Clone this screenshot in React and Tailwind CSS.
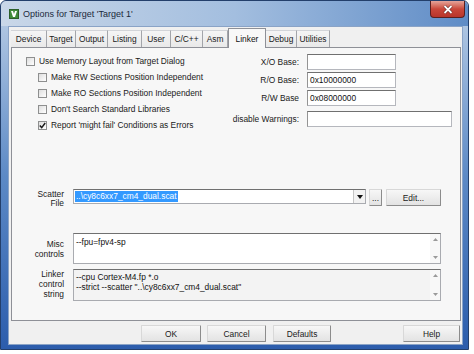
import React from "react";

const tabs = [
  { name: "Device", w: "w-[36px]" },
  { name: "Target", w: "w-[29px]" },
  { name: "Output", w: "w-[32px]" },
  { name: "Listing", w: "w-[34px]" },
  { name: "User", w: "w-[29px]" },
  { name: "C/C++", w: "w-[32px]" },
  { name: "Asm", w: "w-[25px]" },
  { name: "Linker", w: "w-[38px]", active: true },
  { name: "Debug", w: "w-[31px]" },
  { name: "Utilities", w: "w-[33px]" },
];

function Check({ checked }) {
  return (
    <span className="w-[9px] h-[9px] border border-[#8e8f8f] bg-gradient-to-br from-[#dedede] to-white flex items-center justify-center shrink-0">
      {checked && (
        <svg width="7" height="7" viewBox="0 0 7 7">
          <path d="M0.8 3.4 L2.7 5.6 L6.2 1" stroke="#1a1a1a" strokeWidth="1.5" fill="none" />
        </svg>
      )}
    </span>
  );
}

function CheckRow({ label, checked, indent }) {
  return (
    <div className={`h-[16px] flex items-center gap-[4px] ${indent ? "pl-[12px]" : ""}`}>
      <Check checked={checked} />
      <span className="text-[#1a1a1a]">{label}</span>
    </div>
  );
}

function Field({ label, value, w, mt }) {
  return (
    <div className={`flex items-center h-[16px] ${mt}`}>
      <span className="w-[67px] text-right text-[#1a1a1a] whitespace-nowrap">{label}</span>
      <div className={`ml-[8px] h-[16px] ${w} bg-white border border-[#b5b7bd] border-t-[#707070] border-l-[#949494] pl-[2px] leading-[14px] text-[#111]`}>
        {value}
      </div>
    </div>
  );
}

function Btn({ label, w }) {
  return (
    <div className={`h-[17px] ${w} flex items-center justify-center border border-[#8c8c8c] border-t-[#d8d8d8] border-l-[#d8d8d8] bg-gradient-to-b from-[#f7f7f7] to-[#e3e3e3] text-[#1a1a1a] rounded-[1px]`}>
      {label}
    </div>
  );
}

function Arrows() {
  return (
    <div className="w-[10px] h-full flex flex-col justify-between items-center py-[4px] bg-[#f8f8f8]">
      <svg width="5" height="3" viewBox="0 0 5 3"><path d="M0 3 L2.5 0 L5 3 Z" fill="#9a9a9a" /></svg>
      <svg width="5" height="3" viewBox="0 0 5 3"><path d="M0 0 L2.5 3 L5 0 Z" fill="#9a9a9a" /></svg>
    </div>
  );
}

export default function App() {
  return (
    <div className="w-[474px] h-[354px] bg-white font-['Liberation_Sans',Arial,sans-serif] text-[8.4px] leading-[10px] overflow-hidden">
      {/* window frame */}
      <div className="w-[469px] h-[350px] rounded-t-[6px] border border-[#233f6b] bg-gradient-to-b from-[#bccfe6] via-[#5d8ac6] to-[#2c5dac] flex flex-col">
        {/* title bar */}
        <div className="h-[25px] flex items-start rounded-t-[6px] bg-gradient-to-r from-[#c9d7e8] via-[#a3bedf] to-[#5f8cc6]">
          <div className="mt-[8px] ml-[8px] w-[10px] h-[10px] bg-[#3f8a3a] border border-[#2b5e28] flex items-center justify-center">
            <svg width="8" height="8" viewBox="0 0 8 8">
              <path d="M1 1 L3 1 L4 4 L5 1 L7 1 L5 7 L3 7 Z" fill="#ffffff" />
            </svg>
          </div>
          <span className="mt-[8px] ml-[4px] text-[9px] leading-[11px] text-[#1b2a3c]">Options for Target 'Target 1'</span>
          <div className="ml-auto mr-[3px] w-[35px] h-[17px] rounded-b-[4px] border border-[#5a1f1f] border-t-0 bg-gradient-to-b from-[#e3a39a] via-[#c9473a] to-[#b8352b] flex items-center justify-center">
            <svg width="10" height="9" viewBox="0 0 10 9">
              <path d="M1.5 1 L8.5 8 M8.5 1 L1.5 8" stroke="#5a2020" strokeWidth="3" />
              <path d="M1.5 1 L8.5 8 M8.5 1 L1.5 8" stroke="#ffffff" strokeWidth="1.8" />
            </svg>
          </div>
        </div>

        {/* client area */}
        <div className="ml-[7px] mr-[5px] w-[455px] h-[319px] bg-[#f0f0f0] border border-[#8aa3c6] flex flex-col">
          {/* tabs */}
          <div className="h-[20px] flex items-end pl-[2px]">
            {tabs.map((t) =>
              t.active ? (
                <div key={t.name} className={`${t.w} h-[20px] -mb-px z-10 bg-[#f8f8f8] border border-b-0 border-[#8e9097] flex items-center justify-center text-[#111]`}>
                  {t.name}
                </div>
              ) : (
                <div key={t.name} className={`${t.w} h-[17px] border-r border-t border-[#a3a5aa] border-t-[#d2d4d8] bg-gradient-to-b from-[#f5f5f5] to-[#e9e9e9] flex items-center justify-center text-[#1a1a1a]`}>
                  {t.name}
                </div>
              )
            )}
          </div>

          {/* tab panel */}
          <div className="ml-[2px] w-[450px] h-[274px] bg-[#f7f7f7] border border-[#8e9097] flex flex-col">
            <div className="h-[130px] flex">
              <div className="w-[220px] pl-[14px] pt-[5px] flex flex-col">
                <CheckRow label="Use Memory Layout from Target Dialog" />
                <CheckRow indent label="Make RW Sections Position Independent" />
                <CheckRow indent label="Make RO Sections Position Independent" />
                <CheckRow indent label="Don't Search Standard Libraries" />
                <CheckRow indent checked label="Report 'might fail' Conditions as Errors" />
              </div>
              <div className="flex flex-col pt-[6px]">
                <Field label="X/O Base:" value="" w="w-[89px]" mt="" />
                <Field label="R/O Base:" value="0x10000000" w="w-[89px]" mt="mt-[2px]" />
                <Field label="R/W Base" value="0x08000000" w="w-[89px]" mt="mt-[2px]" />
                <Field label="disable Warnings:" value="" w="w-[145px]" mt="mt-[5px]" />
              </div>
            </div>

            {/* scatter file */}
            <div className="mt-[11px] h-[15px] flex items-start">
              <div className="w-[52px] text-right leading-[9px] pt-[1px] text-[#1a1a1a]">
                Scatter
                <br />
                File
              </div>
              <div className="ml-[9px] w-[293px] h-[15px] bg-white border border-[#a9abb0] border-t-[#707070] flex items-center">
                <span className="ml-[1px] px-[1px] bg-[#3399ff] text-white leading-[11px]">..\cy8c6xx7_cm4_dual.scat</span>
                <div className="ml-auto w-[12px] h-full border-l border-[#c5c5c5] bg-[#f2f2f2] flex items-center justify-center">
                  <svg width="6" height="4" viewBox="0 0 6 4"><path d="M0 0 L6 0 L3 4 Z" fill="#111" /></svg>
                </div>
              </div>
              <div className="ml-[3px]">
                <Btn label="..." w="w-[13px]" />
              </div>
              <div className="ml-[4px]">
                <Btn label="Edit..." w="w-[55px]" />
              </div>
            </div>

            {/* misc controls */}
            <div className="mt-[29px] h-[31px] flex items-start">
              <div className="w-[52px] text-right pt-[6px] text-[#1a1a1a]">
                Misc
                <br />
                controls
              </div>
              <div className="ml-[9px] w-[368px] h-[31px] bg-white border border-[#a9abb0] border-t-[#707070] flex">
                <span className="flex-1 pl-[2px] pt-[3px] text-[#111]">--fpu=fpv4-sp</span>
                <Arrows />
              </div>
            </div>

            {/* linker control string */}
            <div className="mt-[5px] h-[32px] flex items-start">
              <div className="w-[52px] text-right text-[#1a1a1a]">
                Linker
                <br />
                control
                <br />
                string
              </div>
              <div className="ml-[9px] w-[368px] h-[32px] bg-[#f3f3f3] border border-[#a9abb0] border-t-[#707070] flex">
                <span className="flex-1 pl-[2px] pt-[2px] text-[#111]">
                  --cpu Cortex-M4.fp *.o
                  <br />
                  --strict --scatter "..\cy8c6xx7_cm4_dual.scat"
                </span>
                <Arrows />
              </div>
            </div>
          </div>

          {/* bottom buttons */}
          <div className="mt-[4px] flex pl-[132px]">
            <Btn label="OK" w="w-[60px]" />
            <div className="ml-[6px]"><Btn label="Cancel" w="w-[59px]" /></div>
            <div className="ml-[7px]"><Btn label="Defaults" w="w-[58px]" /></div>
            <div className="ml-[72px]"><Btn label="Help" w="w-[57px]" /></div>
          </div>
        </div>
      </div>
    </div>
  );
}
